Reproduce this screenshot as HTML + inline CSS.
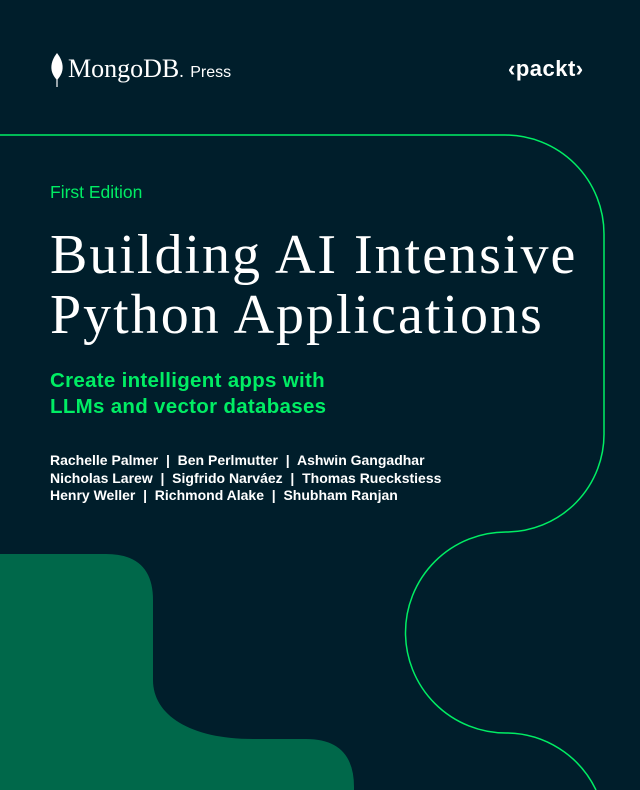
<!DOCTYPE html>
<html><head><meta charset="utf-8"><style>
html,body{margin:0;padding:0}
body{width:640px;height:790px;background:#001e2b;position:relative;overflow:hidden;font-family:"Liberation Sans",sans-serif}
.a{position:absolute;white-space:nowrap}
</style></head><body>
<svg class="a" style="left:0;top:0" width="640" height="790" viewBox="0 0 640 790">
<path d="M0,554 H106 Q153,554 153,600 V680 C153,715 190,739 253,739 H306 Q354,739 354,787 V790 H0 Z" fill="#00684a"/>
<path d="M0,135 H505 A99,99 0 0 1 604,234 V432 A98,98 0 0 1 506,532 A100.5,100.5 0 0 0 506,733 A100,100 0 0 1 596,790" fill="none" stroke="#00ed64" stroke-width="1.5"/>
<path d="M57,53 C50,62 49,72 57,80 C65,72 64,62 57,53 Z" fill="#fff"/>
<path d="M57,78 V87" stroke="#fff" stroke-width="1.2"/>
</svg>
<div class="a" style="left:68px;top:54px;font-family:'Liberation Serif',serif;font-size:26px;color:#fff">MongoDB<span style="font-size:18px">.</span> <span style="font-family:'Liberation Sans',sans-serif;font-size:16px">Press</span></div>
<div class="a" style="left:508px;top:56px;font-size:22px;font-weight:bold;color:#fff;letter-spacing:0.5px">‹packt›</div>
<div class="a" style="left:50px;top:182px;font-size:17.5px;color:#00ed64">First Edition</div>
<div class="a" style="left:50px;top:225px;font-family:'Liberation Serif',serif;font-size:56px;line-height:60px;letter-spacing:2px;color:#fff">Building AI Intensive<br>Python Applications</div>
<div class="a" style="left:50px;top:368px;font-size:20.5px;line-height:26px;font-weight:bold;color:#00ed64;letter-spacing:0.3px">Create intelligent apps with<br>LLMs and vector databases</div>
<div class="a" style="left:50px;top:452px;font-size:14px;line-height:17.7px;font-weight:bold;color:#fff">Rachelle Palmer &nbsp;|&nbsp; Ben Perlmutter &nbsp;|&nbsp; Ashwin Gangadhar<br>Nicholas Larew &nbsp;|&nbsp; Sigfrido Narváez &nbsp;|&nbsp; Thomas Rueckstiess<br>Henry Weller &nbsp;|&nbsp; Richmond Alake &nbsp;|&nbsp; Shubham Ranjan</div>
</body></html>
